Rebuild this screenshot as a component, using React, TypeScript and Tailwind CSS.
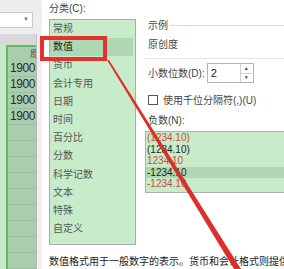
import React from 'react';

const categories = ['常规', '数值', '货币', '会计专用', '日期', '时间', '百分比', '分数', '科学记数', '文本', '特殊', '自定义'];

const negatives = [
  { text: '(1234.10)', red: true },
  { text: '(1234.10)', red: false },
  { text: '1234.10', red: true },
  { text: '-1234.10', red: false, selected: true },
  { text: '-1234.10', red: true },
];

export default function App() {
  return (
    <div className="relative flex w-[284px] h-[269px] overflow-hidden bg-white text-[10px] text-[#333] font-['Liberation_Sans','Noto_Sans_CJK_SC',sans-serif]">
      {/* sheet strip on the left */}
      <div className="flex flex-col w-[42px] shrink-0 bg-[#eeeeee]">
        <div className="h-[13px]" />
        <div className="flex items-center justify-end h-[18px] w-[33px] bg-white border border-l-0 border-[#c9c9c9] pr-[3px]">
          <span className="text-[6px] text-[#777]">▼</span>
        </div>
        <div className="h-[7px]" />
        <div className="flex h-[12px]">
          <div className="w-[36px] bg-[#d8d8d8]" />
          <div className="w-px bg-[#c4c4c4]" />
        </div>
        <div className="flex flex-1">
          <div className="w-[6px] bg-[#c9e8c9]" />
          <div className="w-[2px] bg-[#5cbf5c]" />
          <div className="flex flex-col w-[28px] bg-[#a9cdad] border-t-2 border-[#5cbf5c]">
            <div className="h-[14px] text-right text-[9px] leading-[14px] text-[#444] -mr-[3px]">原</div>
            {['1900', '1900', '1900', '1900', '', '', '', '', '', '', '', '', ''].map((v, i) => (
              <div key={i} className="h-[16px] border-b border-[#9dbfa0] text-right pr-[1px] text-[12px] leading-[15px] tracking-[-0.4px] text-[#2a2a2a]">
                {v}
              </div>
            ))}
          </div>
          <div className="w-px bg-[#b9b9b9]" />
          <div className="flex-1 bg-[#eef0ee]" />
        </div>
      </div>

      {/* format dialog */}
      <div className="flex flex-col flex-1 bg-white">
        <div className="flex">
          <div className="flex flex-col w-[101px] shrink-0 pl-[7px]">
            <div className="h-[19px] leading-[17px] text-[#444]">分类(C):</div>
            <div className="flex flex-col w-[87px] h-[226px] border border-[#ababab] bg-[#c8ebca]">
              {categories.map((c, i) => (
                <div
                  key={c}
                  className={
                    i === 1
                      ? 'h-[18.2px] leading-[18px] pl-[3px] mr-[2px] bg-[#afd8b2] text-[#222]'
                      : 'h-[18.2px] leading-[18px] pl-[3px] text-[#555]'
                  }
                >
                  {c}
                </div>
              ))}
            </div>
          </div>

          <div className="flex flex-col flex-1 pl-[5px]">
            <div className="flex items-center h-[12px] mt-[19px] gap-[2px]">
              <span className="text-[#444]">示例</span>
              <div className="flex-1 h-px bg-[#dcdcdc]" />
            </div>
            <div className="h-[12px] mt-[8px] leading-[12px] text-[#444]">原创度</div>
            <div className="h-px mt-[7px] -ml-[3px] bg-[#e4e4e4]" />
            <div className="flex items-center h-[20px] mt-[4px] gap-[2px]">
              <span className="text-[#444]">小数位数(D):</span>
              <div className="flex items-center w-[47px] h-[20px] border border-[#b4b4b4] bg-white">
                <span className="flex-1 pl-[3px] text-[11px] text-[#222]">2</span>
                <div className="flex flex-col w-[12px] h-[18px] mr-[1px] border-l border-[#d0d0d0]">
                  <div className="flex flex-1 items-center justify-center text-[5px] text-[#444] border-b border-[#d0d0d0]">▲</div>
                  <div className="flex flex-1 items-center justify-center text-[5px] text-[#444]">▼</div>
                </div>
              </div>
            </div>
            <div className="flex items-center h-[12px] mt-[11px] gap-[5px]">
              <div className="w-[10px] h-[10px] border border-[#555] bg-white" />
              <span className="text-[#444]">使用千位分隔符(,)(U)</span>
            </div>
            <div className="h-[12px] mt-[9px] leading-[12px] text-[#444]">负数(N):</div>
            <div className="flex flex-col w-[150px] h-[62px] mt-[4px] -ml-[3px] border border-[#b0b0b0] bg-[#c8ebca]">
              {negatives.map((n, i) => (
                <div
                  key={i}
                  className={
                    (n.selected ? 'bg-[#afd8b2] ' : '') +
                    (n.red ? 'text-[#c0503e] ' : 'text-[#1e1e1e] ') +
                    'h-[11.6px] leading-[11.6px] pl-[1px]'
                  }
                >
                  {n.text}
                </div>
              ))}
            </div>
          </div>
        </div>
        <div className="mt-[11px] pl-[7px] whitespace-nowrap leading-[12px] text-[#222]">
          数值格式用于一般数字的表示。货币和会计格式则提供货币值计算的专用格式。
        </div>
      </div>

      {/* red highlight and arrow */}
      <div className="absolute left-[40px] top-[36px] w-[67px] h-[25px] border-4 border-[#e3312e]" />
      <svg className="absolute left-0 top-0 pointer-events-none" width="284" height="269" viewBox="0 0 284 269">
        <polygon points="107,60 109,60 241,269 234,269" fill="#db2f2c" />
      </svg>
    </div>
  );
}
